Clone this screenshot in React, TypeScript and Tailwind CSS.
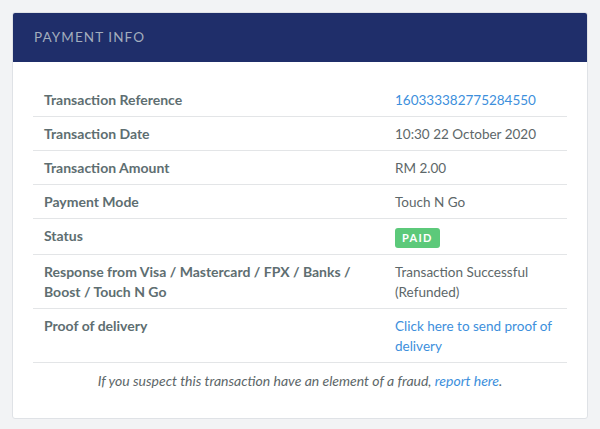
const ROWS: { label: string; value: React.ReactNode }[] = [
  {
    label: 'Transaction Reference',
    value: <a href="#" className="text-[#3d8fdc]">160333382775284550</a>,
  },
  { label: 'Transaction Date', value: '10:30 22 October 2020' },
  { label: 'Transaction Amount', value: 'RM 2.00' },
  { label: 'Payment Mode', value: 'Touch N Go' },
  {
    label: 'Status',
    value: (
      <span className="inline-block rounded-[3px] bg-[#5cc97a] px-[7px] py-[2px] align-middle text-[11px] font-bold leading-[16px] tracking-[0.12em] text-white">
        PAID
      </span>
    ),
  },
  {
    label: 'Response from Visa / Mastercard / FPX / Banks / Boost / Touch N Go',
    value: 'Transaction Successful (Refunded)',
  },
  {
    label: 'Proof of delivery',
    value: <a href="#" className="text-[#3d8fdc]">Click here to send proof of delivery</a>,
  },
];

export default function App() {
  return (
    <div
      className="min-h-[429px] bg-[#f2f3f5] p-3"
      style={{ fontFamily: '"Source Sans Pro", Lato, "Noto Sans", sans-serif' }}
    >
      <div className="overflow-hidden rounded-[3px] border border-[#dfe2e6] bg-white">
        <div className="bg-[#1f2e6a] px-[21px] pb-[16px] pt-[15px]">
          <h2 className="text-[13.5px] leading-[18px] tracking-[0.08em] text-[#a3adbd]">PAYMENT INFO</h2>
        </div>
        <div className="px-[20px] pb-[27px] pt-[21px]">
          <div className="text-[13.5px] leading-[20px] text-[#5d6769]">
            {ROWS.map(r => (
              <div key={r.label} className="grid grid-cols-[351px_1fr] border-b border-[#e3e5e7]">
                <div className="px-[11px] pb-[6px] pr-[30px] pt-[7px] text-[14px] font-bold text-[#5e6e71]">
                  {r.label}
                </div>
                <div className="px-[11px] pb-[6px] pt-[7px]">{r.value}</div>
              </div>
            ))}
          </div>
          <p className="mt-[8px] text-center text-[14px] italic leading-[20px] text-[#5d6769]">
            If you suspect this transaction have an element of a fraud,{' '}
            <a href="#" className="text-[#3d8fdc]">report here</a>.
          </p>
        </div>
      </div>
    </div>
  );
}
